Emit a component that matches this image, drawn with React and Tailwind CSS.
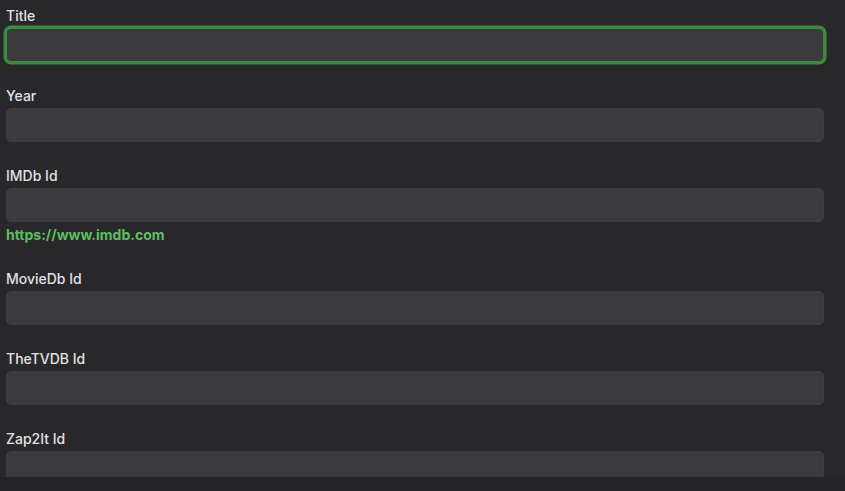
import React from "react";

function Field({ label, focused, children }) {
  return (
    <div className="flex flex-col">
      <label className="text-[14px] leading-[20px] font-medium text-[#e1e1e3] mb-[2px]">{label}</label>
      <div
        className={
          focused
            ? "h-[34px] rounded-[5px] bg-[#3a3a3f] border border-[#3d8b3d] shadow-[0_0_0_2.5px_#3d8b3d]"
            : "h-[34px] rounded-[5px] bg-[#3a3a3f] border border-[#3d3d42]"
        }
      />
      {children}
    </div>
  );
}

export default function App() {
  return (
    <div
      className="w-[845px] h-[491px] bg-[#252527] overflow-hidden"
      style={{ fontFamily: "Inter, 'Noto Sans', sans-serif" }}
    >
      <div className="h-[477px] overflow-hidden bg-[#28282b] pl-[6px] pr-[21px] pt-[6px] flex flex-col gap-[24px]">
        <Field label="Title" focused />
        <Field label="Year" />
        <Field label="IMDb Id">
          <a className="mt-[3px] text-[14px] leading-[20px] font-bold text-[#5fbd5f]">https://www.imdb.com</a>
        </Field>
        <Field label="MovieDb Id" />
        <Field label="TheTVDB Id" />
        <Field label="Zap2It Id" />
      </div>
    </div>
  );
}
